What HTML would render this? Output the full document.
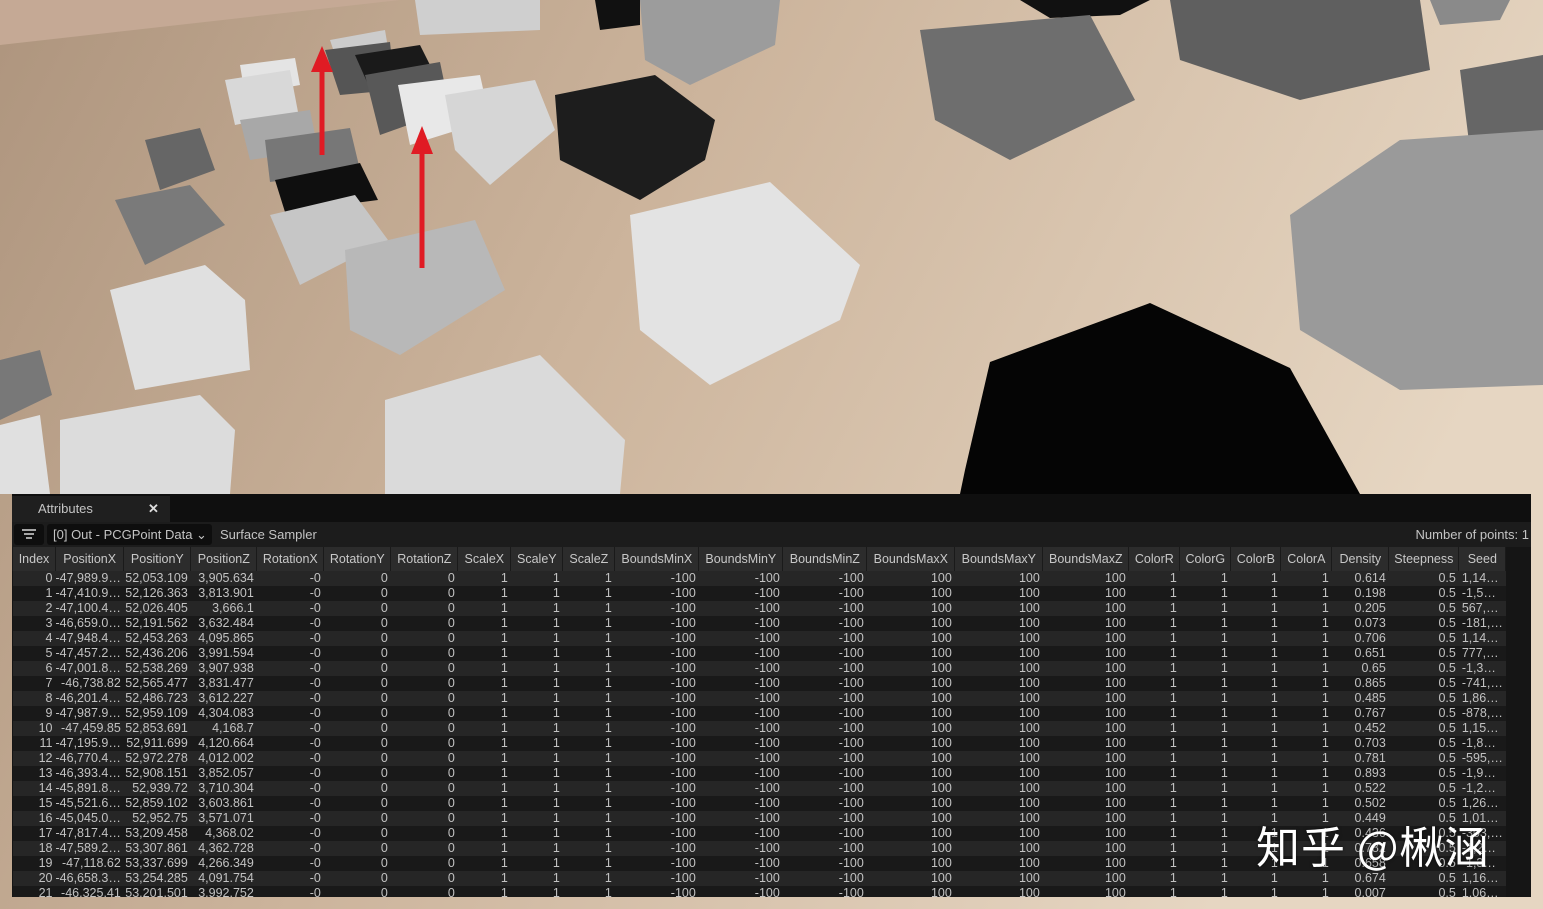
<!DOCTYPE html>
<html><head><meta charset="utf-8"><style>
html,body{margin:0;padding:0;width:1543px;height:909px;overflow:hidden;background:#c9b29b;font-family:"Liberation Sans","Noto Sans CJK SC",sans-serif}
#scene{position:absolute;left:0;top:0}
#panel{position:absolute;left:12px;top:494px;width:1519px;height:403px;background:#151515;overflow:hidden}
#tabbar{position:absolute;left:0;top:0;width:1519px;height:28px;background:#0f0f0f}
#tab{position:absolute;left:0;top:2px;width:158px;height:26px;background:#1f1f1f;color:#c4c4c4;font-size:13px;line-height:26px}
#tab span{position:absolute;left:26px}
#tab b{position:absolute;left:136px;font-size:13px;color:#ddd}
#tool{position:absolute;left:0;top:28px;width:1519px;height:25px;background:#1c1c1c;color:#c4c4c4;font-size:13px;line-height:25px}
#filt{position:absolute;left:2px;top:2px;width:30px;height:21px;background:#0e0e0e;border-radius:3px}
#drop{position:absolute;left:35px;top:2px;width:165px;height:21px;line-height:21px;background:#0e0e0e;border-radius:3px;padding-left:6px;box-sizing:border-box}
table{position:absolute;left:0;top:53px;border-collapse:collapse;table-layout:fixed;font-size:12.5px;color:#c2c2c2}
th{background:#2c2c2c;font-weight:normal;height:24px;border-right:1px solid #1a1a1a;border-left:1px solid #1a1a1a;color:#c8c8c8;padding:0;white-space:nowrap;overflow:hidden}
td{height:15px;line-height:15px;padding:0 3px 0 0;text-align:right;white-space:nowrap;overflow:hidden}
tr:nth-child(even) td{background:#262626}
tr:nth-child(odd) td{background:#191919}
td.s{text-align:left;padding-left:3px}
#wm{position:absolute;left:1256px;top:812px;color:#fff;font-size:44px;font-family:"Noto Sans CJK SC",sans-serif;text-shadow:0 0 3px rgba(0,0,0,.6);letter-spacing:1px}
</style></head><body>
<svg id="scene" width="1543" height="909" viewBox="0 0 1543 909">
<defs><linearGradient id="fl" x1="0" y1="0" x2="1" y2="0.3"><stop offset="0" stop-color="#ae957e"/><stop offset="0.45" stop-color="#ccb49c"/><stop offset="1" stop-color="#e6d6c2"/></linearGradient></defs>
<rect width="1543" height="909" fill="url(#fl)"/>
<polygon points="0,0 400,0 0,45" fill="#c5a995"/>
<polygon points="1020,0 1150,0 1120,15 1050,18" fill="#111"/>
<polygon points="1170,0 1420,0 1430,70 1300,100 1180,60" fill="#5f5f5f"/>
<polygon points="1430,0 1510,0 1500,20 1440,25" fill="#8a8a8a"/>
<polygon points="1460,70 1543,55 1543,200 1470,150" fill="#666"/>
<polygon points="1290,215 1400,140 1543,130 1543,385 1400,390 1300,330" fill="#9a9a9a"/>
<polygon points="920,30 1090,15 1135,100 1010,160 935,120" fill="#6e6e6e"/>
<polygon points="990,362 1150,303 1290,368 1360,494 960,494 965,470" fill="#050505"/>
<polygon points="630,215 770,182 860,265 840,320 710,385 640,330" fill="#e3e3e3"/>
<polygon points="640,0 780,0 775,45 690,85 645,60" fill="#9c9c9c"/>
<polygon points="595,0 640,0 640,25 600,30" fill="#111"/>
<polygon points="555,95 655,75 715,120 705,160 640,200 560,160" fill="#1d1d1d"/>
<polygon points="415,0 540,0 540,30 420,35" fill="#cfcfcf"/>
<polygon points="330,40 385,30 390,60 340,70" fill="#ccc"/>
<polygon points="325,50 390,42 395,90 340,95" fill="#555"/>
<polygon points="355,55 420,45 440,85 375,100" fill="#1a1a1a"/>
<polygon points="365,75 440,62 450,110 380,135" fill="#585858"/>
<polygon points="398,85 480,75 490,120 410,145" fill="#e8e8e8"/>
<polygon points="445,95 535,80 555,130 490,185 455,150" fill="#d6d6d6"/>
<polygon points="240,65 295,58 300,85 245,95" fill="#e4e4e4"/>
<polygon points="225,80 290,70 298,112 235,125" fill="#d8d8d8"/>
<polygon points="240,120 310,110 318,150 250,160" fill="#a8a8a8"/>
<polygon points="265,140 350,128 360,170 270,182" fill="#777"/>
<polygon points="275,180 360,163 378,200 285,212" fill="#0f0f0f"/>
<polygon points="270,215 355,195 388,240 300,285" fill="#c6c6c6"/>
<polygon points="345,250 475,220 505,290 400,355 350,330" fill="#b8b8b8"/>
<polygon points="145,140 200,128 215,170 160,190" fill="#666"/>
<polygon points="115,200 190,185 225,225 145,265" fill="#7a7a7a"/>
<polygon points="110,290 205,265 245,300 250,370 135,390" fill="#e0e0e0"/>
<polygon points="385,400 540,355 625,440 620,494 385,494" fill="#dadada"/>
<polygon points="60,420 200,395 235,430 230,494 60,494" fill="#dcdcdc"/>
<polygon points="0,360 40,350 52,395 0,420" fill="#787878"/>
<polygon points="0,425 40,415 50,494 0,494" fill="#e0e0e0"/>
<g stroke="#e01b24" stroke-width="5" fill="#e01b24">
<line x1="322" y1="155" x2="322" y2="65"/><polygon points="311,72 322,46 333,72" stroke="none"/>
<line x1="422" y1="268" x2="422" y2="148"/><polygon points="411,154 422,126 433,154" stroke="none"/>
</g>
</svg>
<div id="panel">
<div id="tabbar"><div id="tab"><span>Attributes</span><b>✕</b></div></div>
<div id="tool"><div id="filt"><svg width="30" height="21"><g stroke="#ccc" stroke-width="1.6"><line x1="8" y1="6" x2="22" y2="6"/><line x1="10" y1="10" x2="20" y2="10"/><line x1="12" y1="14" x2="18" y2="14"/></g></svg></div>
<div id="drop">[0] Out - PCGPoint Data &#8964;</div>
<span style="position:absolute;left:208px">Surface Sampler</span>
<span style="position:absolute;right:2px">Number of points: 1</span></div>
<table>
<colgroup><col style="width:43px"><col style="width:65px"><col style="width:67px"><col style="width:66px"><col style="width:67px"><col style="width:67px"><col style="width:67px"><col style="width:53px"><col style="width:52px"><col style="width:52px"><col style="width:84px"><col style="width:84px"><col style="width:84px"><col style="width:88px"><col style="width:88px"><col style="width:86px"><col style="width:51px"><col style="width:51px"><col style="width:50px"><col style="width:51px"><col style="width:57px"><col style="width:70px"><col style="width:45px"></colgroup>
<tr><th>Index</th><th>PositionX</th><th>PositionY</th><th>PositionZ</th><th>RotationX</th><th>RotationY</th><th>RotationZ</th><th>ScaleX</th><th>ScaleY</th><th>ScaleZ</th><th>BoundsMinX</th><th>BoundsMinY</th><th>BoundsMinZ</th><th>BoundsMaxX</th><th>BoundsMaxY</th><th>BoundsMaxZ</th><th>ColorR</th><th>ColorG</th><th>ColorB</th><th>ColorA</th><th>Density</th><th>Steepness</th><th>Seed</th></tr>
<tr><td>0</td><td>-47,989.9…</td><td>52,053.109</td><td>3,905.634</td><td>-0</td><td>0</td><td>0</td><td>1</td><td>1</td><td>1</td><td>-100</td><td>-100</td><td>-100</td><td>100</td><td>100</td><td>100</td><td>1</td><td>1</td><td>1</td><td>1</td><td>0.614</td><td>0.5</td><td class="s">1,14…</td></tr>
<tr><td>1</td><td>-47,410.9…</td><td>52,126.363</td><td>3,813.901</td><td>-0</td><td>0</td><td>0</td><td>1</td><td>1</td><td>1</td><td>-100</td><td>-100</td><td>-100</td><td>100</td><td>100</td><td>100</td><td>1</td><td>1</td><td>1</td><td>1</td><td>0.198</td><td>0.5</td><td class="s">-1,5…</td></tr>
<tr><td>2</td><td>-47,100.4…</td><td>52,026.405</td><td>3,666.1</td><td>-0</td><td>0</td><td>0</td><td>1</td><td>1</td><td>1</td><td>-100</td><td>-100</td><td>-100</td><td>100</td><td>100</td><td>100</td><td>1</td><td>1</td><td>1</td><td>1</td><td>0.205</td><td>0.5</td><td class="s">567,…</td></tr>
<tr><td>3</td><td>-46,659.0…</td><td>52,191.562</td><td>3,632.484</td><td>-0</td><td>0</td><td>0</td><td>1</td><td>1</td><td>1</td><td>-100</td><td>-100</td><td>-100</td><td>100</td><td>100</td><td>100</td><td>1</td><td>1</td><td>1</td><td>1</td><td>0.073</td><td>0.5</td><td class="s">-181,…</td></tr>
<tr><td>4</td><td>-47,948.4…</td><td>52,453.263</td><td>4,095.865</td><td>-0</td><td>0</td><td>0</td><td>1</td><td>1</td><td>1</td><td>-100</td><td>-100</td><td>-100</td><td>100</td><td>100</td><td>100</td><td>1</td><td>1</td><td>1</td><td>1</td><td>0.706</td><td>0.5</td><td class="s">1,14…</td></tr>
<tr><td>5</td><td>-47,457.2…</td><td>52,436.206</td><td>3,991.594</td><td>-0</td><td>0</td><td>0</td><td>1</td><td>1</td><td>1</td><td>-100</td><td>-100</td><td>-100</td><td>100</td><td>100</td><td>100</td><td>1</td><td>1</td><td>1</td><td>1</td><td>0.651</td><td>0.5</td><td class="s">777,…</td></tr>
<tr><td>6</td><td>-47,001.8…</td><td>52,538.269</td><td>3,907.938</td><td>-0</td><td>0</td><td>0</td><td>1</td><td>1</td><td>1</td><td>-100</td><td>-100</td><td>-100</td><td>100</td><td>100</td><td>100</td><td>1</td><td>1</td><td>1</td><td>1</td><td>0.65</td><td>0.5</td><td class="s">-1,3…</td></tr>
<tr><td>7</td><td>-46,738.82</td><td>52,565.477</td><td>3,831.477</td><td>-0</td><td>0</td><td>0</td><td>1</td><td>1</td><td>1</td><td>-100</td><td>-100</td><td>-100</td><td>100</td><td>100</td><td>100</td><td>1</td><td>1</td><td>1</td><td>1</td><td>0.865</td><td>0.5</td><td class="s">-741,…</td></tr>
<tr><td>8</td><td>-46,201.4…</td><td>52,486.723</td><td>3,612.227</td><td>-0</td><td>0</td><td>0</td><td>1</td><td>1</td><td>1</td><td>-100</td><td>-100</td><td>-100</td><td>100</td><td>100</td><td>100</td><td>1</td><td>1</td><td>1</td><td>1</td><td>0.485</td><td>0.5</td><td class="s">1,86…</td></tr>
<tr><td>9</td><td>-47,987.9…</td><td>52,959.109</td><td>4,304.083</td><td>-0</td><td>0</td><td>0</td><td>1</td><td>1</td><td>1</td><td>-100</td><td>-100</td><td>-100</td><td>100</td><td>100</td><td>100</td><td>1</td><td>1</td><td>1</td><td>1</td><td>0.767</td><td>0.5</td><td class="s">-878,…</td></tr>
<tr><td>10</td><td>-47,459.85</td><td>52,853.691</td><td>4,168.7</td><td>-0</td><td>0</td><td>0</td><td>1</td><td>1</td><td>1</td><td>-100</td><td>-100</td><td>-100</td><td>100</td><td>100</td><td>100</td><td>1</td><td>1</td><td>1</td><td>1</td><td>0.452</td><td>0.5</td><td class="s">1,15…</td></tr>
<tr><td>11</td><td>-47,195.9…</td><td>52,911.699</td><td>4,120.664</td><td>-0</td><td>0</td><td>0</td><td>1</td><td>1</td><td>1</td><td>-100</td><td>-100</td><td>-100</td><td>100</td><td>100</td><td>100</td><td>1</td><td>1</td><td>1</td><td>1</td><td>0.703</td><td>0.5</td><td class="s">-1,8…</td></tr>
<tr><td>12</td><td>-46,770.4…</td><td>52,972.278</td><td>4,012.002</td><td>-0</td><td>0</td><td>0</td><td>1</td><td>1</td><td>1</td><td>-100</td><td>-100</td><td>-100</td><td>100</td><td>100</td><td>100</td><td>1</td><td>1</td><td>1</td><td>1</td><td>0.781</td><td>0.5</td><td class="s">-595,…</td></tr>
<tr><td>13</td><td>-46,393.4…</td><td>52,908.151</td><td>3,852.057</td><td>-0</td><td>0</td><td>0</td><td>1</td><td>1</td><td>1</td><td>-100</td><td>-100</td><td>-100</td><td>100</td><td>100</td><td>100</td><td>1</td><td>1</td><td>1</td><td>1</td><td>0.893</td><td>0.5</td><td class="s">-1,9…</td></tr>
<tr><td>14</td><td>-45,891.8…</td><td>52,939.72</td><td>3,710.304</td><td>-0</td><td>0</td><td>0</td><td>1</td><td>1</td><td>1</td><td>-100</td><td>-100</td><td>-100</td><td>100</td><td>100</td><td>100</td><td>1</td><td>1</td><td>1</td><td>1</td><td>0.522</td><td>0.5</td><td class="s">-1,2…</td></tr>
<tr><td>15</td><td>-45,521.6…</td><td>52,859.102</td><td>3,603.861</td><td>-0</td><td>0</td><td>0</td><td>1</td><td>1</td><td>1</td><td>-100</td><td>-100</td><td>-100</td><td>100</td><td>100</td><td>100</td><td>1</td><td>1</td><td>1</td><td>1</td><td>0.502</td><td>0.5</td><td class="s">1,26…</td></tr>
<tr><td>16</td><td>-45,045.0…</td><td>52,952.75</td><td>3,571.071</td><td>-0</td><td>0</td><td>0</td><td>1</td><td>1</td><td>1</td><td>-100</td><td>-100</td><td>-100</td><td>100</td><td>100</td><td>100</td><td>1</td><td>1</td><td>1</td><td>1</td><td>0.449</td><td>0.5</td><td class="s">1,01…</td></tr>
<tr><td>17</td><td>-47,817.4…</td><td>53,209.458</td><td>4,368.02</td><td>-0</td><td>0</td><td>0</td><td>1</td><td>1</td><td>1</td><td>-100</td><td>-100</td><td>-100</td><td>100</td><td>100</td><td>100</td><td>1</td><td>1</td><td>1</td><td>1</td><td>0.436</td><td>0.5</td><td class="s">-303,…</td></tr>
<tr><td>18</td><td>-47,589.2…</td><td>53,307.861</td><td>4,362.728</td><td>-0</td><td>0</td><td>0</td><td>1</td><td>1</td><td>1</td><td>-100</td><td>-100</td><td>-100</td><td>100</td><td>100</td><td>100</td><td>1</td><td>1</td><td>1</td><td>1</td><td>0.782</td><td>0.5</td><td class="s">-1,2…</td></tr>
<tr><td>19</td><td>-47,118.62</td><td>53,337.699</td><td>4,266.349</td><td>-0</td><td>0</td><td>0</td><td>1</td><td>1</td><td>1</td><td>-100</td><td>-100</td><td>-100</td><td>100</td><td>100</td><td>100</td><td>1</td><td>1</td><td>1</td><td>1</td><td>0.658</td><td>0.5</td><td class="s">-1,3…</td></tr>
<tr><td>20</td><td>-46,658.3…</td><td>53,254.285</td><td>4,091.754</td><td>-0</td><td>0</td><td>0</td><td>1</td><td>1</td><td>1</td><td>-100</td><td>-100</td><td>-100</td><td>100</td><td>100</td><td>100</td><td>1</td><td>1</td><td>1</td><td>1</td><td>0.674</td><td>0.5</td><td class="s">1,16…</td></tr>
<tr><td>21</td><td>-46,325.41</td><td>53,201.501</td><td>3,992.752</td><td>-0</td><td>0</td><td>0</td><td>1</td><td>1</td><td>1</td><td>-100</td><td>-100</td><td>-100</td><td>100</td><td>100</td><td>100</td><td>1</td><td>1</td><td>1</td><td>1</td><td>0.007</td><td>0.5</td><td class="s">1,06…</td></tr>
</table>
</div>
<div id="wm">知乎 @楸涵</div>
</body></html>
